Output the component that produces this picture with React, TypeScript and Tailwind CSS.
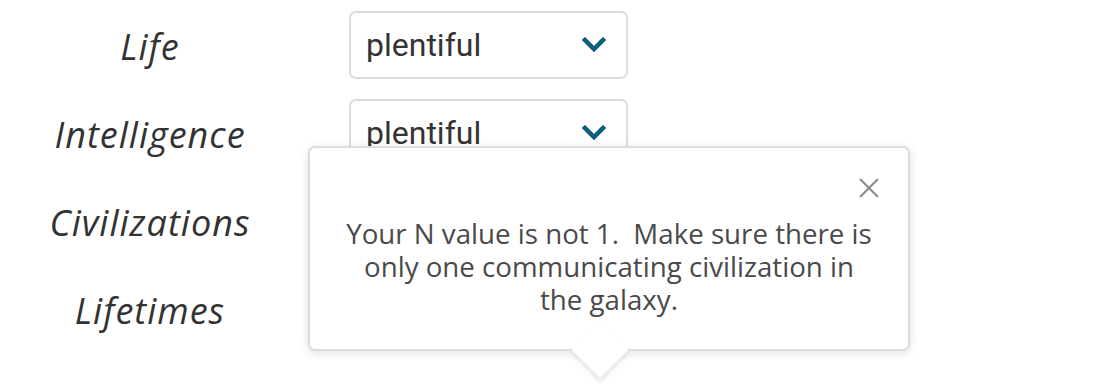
import React from "react";

const rows = ["Life", "Intelligence", "Civilizations", "Lifetimes"];

function Chevron() {
  return (
    <svg width="24" height="16" viewBox="0 0 24 16" fill="none">
      <polyline points="3,3 12,12 21,3" stroke="#0b5f7c" strokeWidth="4.5" strokeLinecap="square" strokeLinejoin="miter" />
    </svg>
  );
}

function Select({ hidden }: { hidden?: boolean }) {
  return (
    <div className={"w-[279px] h-[68px] rounded-[7px] border-2 border-[#dcdce0] bg-white flex items-center justify-between pl-[15px] pr-[20px]" + (hidden ? " invisible" : "")}>
      <span className="text-[32px] text-[#333333] leading-none" style={{ fontFamily: "Roboto, sans-serif" }}>
        plentiful
      </span>
      <Chevron />
    </div>
  );
}

export default function App() {
  return (
    <div className="relative w-[1104px] h-[389px] bg-white overflow-hidden">
      <div className="flex flex-col gap-[20px] pt-[11px]">
        {rows.map((r, i) => (
          <div key={r} className="flex items-center">
            <div
              className="w-[300px] text-center italic font-normal text-[36px] tracking-[1px] text-[#333333] leading-none pt-[4px]"
              style={{ fontFamily: "'Open Sans', sans-serif" }}
            >
              {r}
            </div>
            <div className="ml-[49px]">
              <Select hidden={i > 1} />
            </div>
          </div>
        ))}
      </div>

      <div className="absolute left-[308px] top-[146px] w-[602px] h-[205px]">
        <div className="absolute inset-0 rounded-[7px] border-2 border-[#dcdce0] bg-white shadow-[0_2px_10px_rgba(0,0,0,0.12)]" />
        <div className="absolute left-[272px] top-[184px] w-[40px] h-[40px] bg-white rotate-45 shadow-[3px_3px_5px_rgba(0,0,0,0.1)]" />
        <div className="relative flex flex-col h-full">
          <div className="flex justify-end pt-[30px] pr-[29px]">
            <svg width="24" height="24" viewBox="0 0 24 24" fill="none">
              <line x1="3" y1="3" x2="21" y2="21" stroke="#8c8c8c" strokeWidth="2.2" />
              <line x1="21" y1="3" x2="3" y2="21" stroke="#8c8c8c" strokeWidth="2.2" />
            </svg>
          </div>
          <p
            className="mt-[17px] px-[10px] text-center font-normal text-[27.7px] leading-[33px] text-[#4a4a4a]"
            style={{ fontFamily: "'Open Sans', sans-serif" }}
          >
            Your N value is not 1.&nbsp; Make sure there is
            <br />
            only one communicating civilization in
            <br />
            the galaxy.
          </p>
        </div>
      </div>
    </div>
  );
}
